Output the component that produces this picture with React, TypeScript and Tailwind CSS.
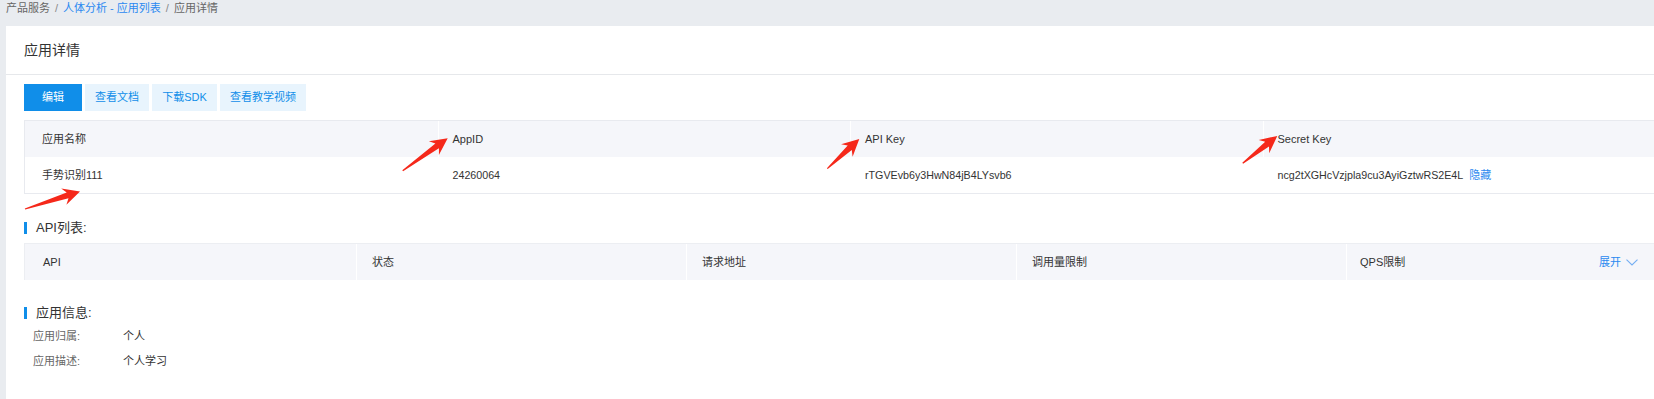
import React from "react";

type Pt = [number, number];

function arrowPoints(tail: Pt, tip: Pt): string {
  const dx = tip[0] - tail[0];
  const dy = tip[1] - tail[1];
  const len = Math.hypot(dx, dy);
  const ux = dx / len;
  const uy = dy / len;
  const nx = -uy;
  const ny = ux;
  const at = (along: number, side: number): Pt => [
    tail[0] + ux * along + nx * side,
    tail[1] + uy * along + ny * side,
  ];
  const pts: Pt[] = [
    tip,
    at(len - 17, 8.5),
    at(len - 13, 3),
    at(0, 0.6),
    at(0, -0.6),
    at(len - 13, -3),
    at(len - 17, -8.5),
  ];
  return pts.map((p) => `${p[0].toFixed(1)},${p[1].toFixed(1)}`).join(" ");
}

const arrows: [Pt, Pt][] = [
  [[25, 209], [80, 191.5]],
  [[402.7, 170.7], [447.7, 138.3]],
  [[827.3, 168.7], [859.3, 139]],
  [[1242.7, 163.3], [1277.3, 136]],
];

function SectionTitle({ children }: { children: React.ReactNode }) {
  return (
    <div className="flex items-center h-[18px]">
      <div className="w-[3px] h-[12px] bg-[#108ee9]" />
      <div className="ml-[9px] text-[13px] leading-[18px] text-[#333]">{children}</div>
    </div>
  );
}

export default function App() {
  const font = { fontFamily: '"Liberation Sans", "Noto Sans CJK SC", sans-serif' };
  return (
    <div
      className="relative w-[1654px] h-[399px] overflow-hidden bg-[#e9ecf0] flex flex-col"
      style={font}
    >
      {/* breadcrumb */}
      <div className="h-[16px] pl-[6px] flex items-center text-[11px] leading-[16px] text-[#666] shrink-0">
        <span>产品服务</span>
        <span className="mx-[5px] text-[#888]">/</span>
        <span className="text-[#2b89f0]">人体分析 - 应用列表</span>
        <span className="mx-[5px] text-[#888]">/</span>
        <span>应用详情</span>
      </div>

      {/* card */}
      <div className="mt-[10px] ml-[6px] w-[1720px] flex-1 bg-white">
        <div className="h-[49px] flex items-center pl-[18px] text-[14px] text-[#333] border-b border-[#e6e8eb]">
          应用详情
        </div>

        <div className="pl-[18px]">
          {/* buttons */}
          <div className="mt-[9px] flex gap-[3px] text-[11px]">
            <div className="w-[58px] h-[27px] flex items-center justify-center bg-[#108ee9] text-white">编辑</div>
            <div className="w-[64px] h-[27px] flex items-center justify-center bg-[#e8f4fd] text-[#108ee9]">查看文档</div>
            <div className="w-[65px] h-[27px] flex items-center justify-center bg-[#e8f4fd] text-[#108ee9]">下载SDK</div>
            <div className="w-[86px] h-[27px] flex items-center justify-center bg-[#e8f4fd] text-[#108ee9]">查看教学视频</div>
          </div>

          {/* app info table */}
          <div className="mt-[9px] w-[1651px] border-t border-l border-b border-[#e8eaef] text-[11px] text-[#333]">
            <div className="grid grid-cols-4 h-[36px] bg-[#f5f6fa]">
              <div className="flex items-center pl-[17px]">应用名称</div>
              <div className="flex items-center pl-[14px] border-l border-white">AppID</div>
              <div className="flex items-center pl-[14px] border-l border-white">API Key</div>
              <div className="flex items-center pl-[14px] border-l border-white">Secret Key</div>
            </div>
            <div className="grid grid-cols-4 h-[36px] bg-white">
              <div className="flex items-center pl-[17px]">手势识别111</div>
              <div className="flex items-center pl-[15px] text-[10.7px]">24260064</div>
              <div className="flex items-center pl-[15px] text-[10.7px]">rTGVEvb6y3HwN84jB4LYsvb6</div>
              <div className="flex items-center pl-[15px]">
                <span className="text-[10.7px]">ncg2tXGHcVzjpla9cu3AyiGztwRS2E4L</span>
                <span className="ml-[6px] text-[#2b89f0]">隐藏</span>
              </div>
            </div>
          </div>

          {/* API list */}
          <div className="mt-[25px]">
            <SectionTitle>API列表:</SectionTitle>
          </div>
          <div className="mt-[6px] w-[1652px] border-t border-l border-[#eceef2] bg-[#f5f6fa] h-[37px] grid grid-cols-[331px_330px_330px_330px_330px] text-[11px] text-[#333]">
            <div className="flex items-center pl-[18px]">API</div>
            <div className="flex items-center pl-[15px] border-l border-white">状态</div>
            <div className="flex items-center pl-[15px] border-l border-white">请求地址</div>
            <div className="flex items-center pl-[15px] border-l border-white">调用量限制</div>
            <div className="flex items-center justify-between pl-[13px] pr-[38px] border-l border-white">
              <span>QPS限制</span>
              <span className="flex items-center text-[#2b89f0]">
                展开
                <svg className="ml-[5px]" width="12" height="7" viewBox="0 0 12 7" fill="none">
                  <path d="M0.5 0.6 L6 6 L11.5 0.6" stroke="#74aef2" strokeWidth="1.1" />
                </svg>
              </span>
            </div>
          </div>

          {/* app info */}
          <div className="mt-[24px]">
            <SectionTitle>应用信息:</SectionTitle>
          </div>
          <div className="mt-[2px] pl-[9px] text-[11px]">
            <div className="h-[25px] flex items-center">
              <span className="w-[90px] text-[#666]">应用归属:</span>
              <span className="text-[#333]">个人</span>
            </div>
            <div className="h-[25px] flex items-center">
              <span className="w-[90px] text-[#666]">应用描述:</span>
              <span className="text-[#333]">个人学习</span>
            </div>
          </div>
        </div>
      </div>

      {/* red annotation arrows */}
      <svg className="absolute left-0 top-0 pointer-events-none" width="1654" height="399">
        {arrows.map(([t, p], i) => (
          <polygon key={i} points={arrowPoints(t, p)} fill="#f5281a" />
        ))}
      </svg>
    </div>
  );
}
